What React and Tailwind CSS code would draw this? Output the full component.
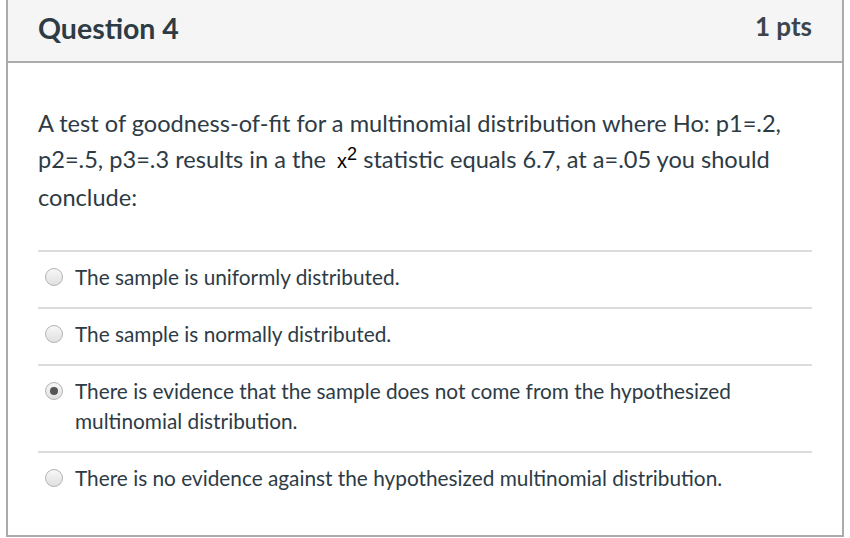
import React from 'react'

const answers = [
  { text: "The sample is uniformly distributed.", checked: false },
  { text: "The sample is normally distributed.", checked: false },
  { text: "There is evidence that the sample does not come from the hypothesized multinomial distribution.", checked: true },
  { text: "There is no evidence against the hypothesized multinomial distribution.", checked: false },
];

const Radio = ({ checked }) => (
  <span className="mt-[6px] ml-[7px] flex h-[18px] w-[18px] shrink-0 items-center justify-center rounded-full border border-[#b3b3b3] bg-gradient-to-b from-[#f7f7f7] to-[#e0e0e0]">
    {checked && <span className="h-[8px] w-[8px] rounded-full bg-[#555]" />}
  </span>
);

const App = () => {
  return (
    <div className="min-h-[538px] bg-white px-[6px] text-[#2d3b45]" style={{ fontFamily: 'Lato, "Noto Sans", sans-serif' }}>
      <div className="border-x-2 border-b-2 border-[#ababab]">
        <div className="flex h-[63px] items-start justify-between border-b-2 border-[#ababab] bg-[#f5f5f5] px-[30px] pt-[11px]">
          <h2 className="text-[28.5px] font-bold leading-[1.2]">Question 4</h2>
          <span className="text-[26px] font-bold leading-[1.2] text-[#3b454d]">1 pts</span>
        </div>

        <div className="px-[30px] pt-[43px] pb-[27px]">
          <p className="text-[23.6px] leading-[35.5px]">
            A test of goodness-of-fit for a multinomial distribution where Ho: p1=.2, p2=.5, p3=.3 results in a the{' '}
            <span className="ml-[5px] text-[20px] text-black" style={{ fontFamily: '"Liberation Sans", Arial, sans-serif' }}>
              x<span className="relative -top-[8px] text-[18px]">2</span>
            </span>{' '}
            statistic equals 6.7, at a=.05 you should conclude:
          </p>

          <div className="mt-[34px]">
            {answers.map((a, i) => (
              <div key={i} className="flex gap-[12px] border-t-2 border-[#dcdcdc] pt-[10px] pb-[15px]">
                <Radio checked={a.checked} />
                <span className="text-[20.8px] leading-[30px]">{a.text}</span>
              </div>
            ))}
          </div>
        </div>
      </div>
    </div>
  );
};

export default App;
